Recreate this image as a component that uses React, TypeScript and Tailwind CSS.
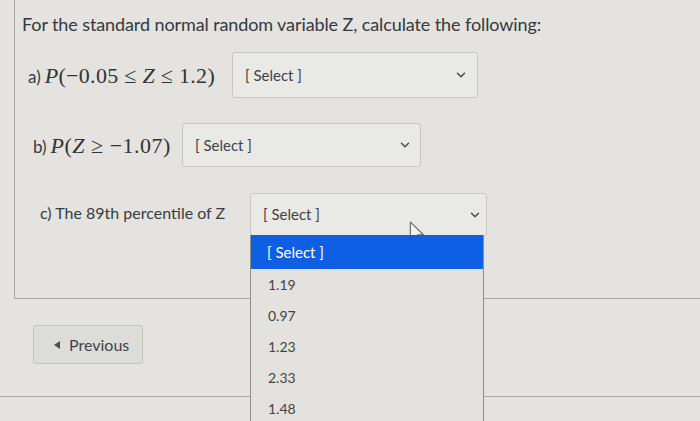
import { ChevronDown } from "lucide-react";

const options = ["1.19", "0.97", "1.23", "2.33", "1.48"];

function SelectBox({
  width,
  height,
  chevronRight,
  children,
}: {
  width: string;
  height: string;
  chevronRight: string;
  children?: React.ReactNode;
}) {
  return (
    <div
      className={`relative flex items-center rounded-[3px] border border-[#c6c6c3] bg-[#e9e9e6] pl-[12px] ${width} ${height}`}
    >
      <span className="text-[15px] text-[#3d4348]">[ Select ]</span>
      <ChevronDown
        className={`absolute top-1/2 -translate-y-1/2 text-[#4a4f53] ${chevronRight}`}
        size={14}
        strokeWidth={2.6}
      />
      {children}
    </div>
  );
}

function Cursor() {
  return (
    <svg
      className="absolute left-[158px] top-[27px]"
      width="18"
      height="24"
      viewBox="0 0 16 22"
    >
      <path
        d="M1 1 L1 17 L5 13.5 L8 20 L10.5 19 L7.6 12.6 L13 12.6 Z"
        fill="#f4f4f4"
        stroke="#6b6f73"
        strokeWidth="1.1"
        strokeLinejoin="round"
      />
    </svg>
  );
}

export default function App() {
  const serif = "font-['Liberation_Serif',serif]";
  return (
    <div className="relative h-[421px] w-[700px] overflow-hidden bg-[#e4e3df] font-['Lato','Noto_Sans',sans-serif] text-[#363c41]">
      {/* Question box */}
      <div className="mr-[-20px] ml-[14px] h-[299px] border-b border-l border-[#a8a8a4] pt-[12px]">
        <h1 className="ml-[7px] text-[18px] leading-[24px] tracking-[-0.1px] text-[#33393e]">
          For the standard normal random variable Z, calculate the following:
        </h1>

        {/* a */}
        <div className="mt-[16px] ml-[13px] flex items-center">
          <div className="flex w-[204px] items-baseline">
            <span className="text-[17px]">a)</span>
            <span className={`${serif} ml-[4px] text-[22px] tracking-[0.3px] text-[#2f3438]`}>
              <i>P</i>(−0.05 ≤ <i>Z</i> ≤ 1.2)
            </span>
          </div>
          <SelectBox width="w-[246px]" height="h-[46px]" chevronRight="right-[9px]" />
        </div>

        {/* b */}
        <div className="mt-[25px] ml-[18px] flex items-center">
          <div className="flex w-[149px] items-baseline">
            <span className="text-[17px]">b)</span>
            <span className={`${serif} ml-[4px] text-[22px] tracking-[0.5px] text-[#2f3438]`}>
              <i>P</i>(<i>Z</i> ≥ −1.07)
            </span>
          </div>
          <SelectBox width="w-[239px]" height="h-[44px]" chevronRight="right-[8px]" />
        </div>

        {/* c */}
        <div className="mt-[26px] ml-[25px] flex items-center">
          <div className="w-[210px] pb-[4px] text-[16px]">c) The 89th percentile of Z</div>
          <SelectBox width="w-[237px]" height="h-[43px]" chevronRight="right-[4px]">
            <Cursor />
            {/* Open dropdown list */}
            <div className="absolute top-full left-[-1px] z-10 w-[234px] border-x border-[#8d8d8a] bg-[#e3e2de]">
              <div className="flex h-[34px] items-center bg-[#0f5fe4] pl-[16px] text-[15px] text-white">
                [ Select ]
              </div>
              {options.map((o) => (
                <div
                  key={o}
                  className="flex h-[31px] items-center pl-[17px] text-[14px] text-[#3f4448]"
                >
                  {o}
                </div>
              ))}
            </div>
          </SelectBox>
        </div>
      </div>

      {/* Footer */}
      <div className="flex h-[98px] items-center border-b border-[#a8a8a4] pb-[6px] pl-[33px]">
        <button className="flex h-[39px] w-[110px] items-center rounded-[3px] border border-[#c3c3c0] bg-[#dcdcd9] pl-[20px] text-[16px] text-[#3f4448]">
          <svg width="6" height="8" viewBox="0 0 6 8" className="mr-[9px]">
            <path d="M6 0 L0 4 L6 8 Z" fill="#4a4f53" />
          </svg>
          Previous
        </button>
      </div>
    </div>
  );
}
